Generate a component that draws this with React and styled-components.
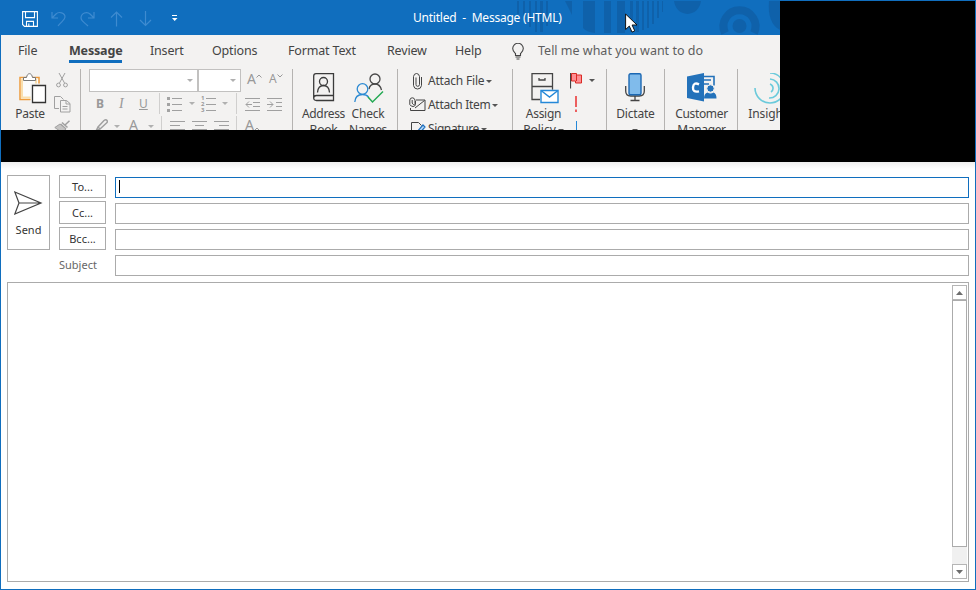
import styled, { createGlobalStyle } from 'styled-components'

export default function App() {
  return (
    <>
      <GlobalStyle />
      <Window>
        <Top>
          <TitleBar>
            <Pattern />
            <QuickAccess />
            <Title>Untitled&nbsp; -&nbsp; Message (HTML)</Title>
            <Cursor />
          </TitleBar>
          <Tabs>
            <Tab>File</Tab>
            <Tab $active>Message</Tab>
            <Tab>Insert</Tab>
            <Tab>Options</Tab>
            <Tab>Format Text</Tab>
            <Tab>Review</Tab>
            <Tab>Help</Tab>
            <BulbIcon />
            <Tab $soft>Tell me what you want to do</Tab>
          </Tabs>
          <Ribbon>
            <ClipboardGroup />
            <FontGroup />
            <NamesGroup />
            <AttachGroup />
            <TagsGroup />
            <Group $width={58}>
              <BigButton $width={57}>
                <DictateIcon />
                <Caption $spacing={-0.2}>Dictate</Caption>
                <Arrow $dark />
              </BigButton>
            </Group>
            <Group $width={73}>
              <BigButton $width={72} $shift={1}>
                <CustomerIcon />
                <Caption $spacing={-0.35}>Customer</Caption>
                <Caption $spacing={-0.35}>Manager</Caption>
              </BigButton>
            </Group>
            <Group $width={42} $last>
              <BigButton $width={63} $shift={2}>
                <InsightsIcon />
                <Caption $spacing={-0.1}>Insights</Caption>
              </BigButton>
            </Group>
          </Ribbon>
        </Top>
        <Compose>
          <Fields>
            <SendButton>
              <SendIcon />
              Send
            </SendButton>
            <FieldButton>To...</FieldButton>
            <Field $focused>
              <Caret />
            </Field>
            <FieldButton>Cc...</FieldButton>
            <Field />
            <FieldButton>Bcc...</FieldButton>
            <Field />
            <Subject>Subject</Subject>
            <Field />
          </Fields>
          <Body>
            <Scrollbar>
              <ScrollButton>
                <svg width="7" height="4" viewBox="0 0 7 4">
                  <path d="M0 4 3.5 0 7 4z" fill="#6d6d6d" />
                </svg>
              </ScrollButton>
              <Thumb />
              <ScrollButton>
                <svg width="7" height="4" viewBox="0 0 7 4">
                  <path d="M0 0h7L3.5 4z" fill="#6d6d6d" />
                </svg>
              </ScrollButton>
            </Scrollbar>
          </Body>
        </Compose>
      </Window>
    </>
  )
}

function QuickAccess() {
  return (
    <QuickBar>
      <svg width="16" height="16" viewBox="0 0 16 16" fill="none" stroke="#fff" strokeWidth="1.1">
        <path d="M.6.6h14.8v14.8H2.5L.6 13.5zM3.5.6v6h9v-6M4.5 15.4v-5h7v5M6.8 12.5v3" />
      </svg>
      <Faded width="16" height="16" viewBox="0 0 16 16">
        <path d="M1 1v6h6M1 7l4-4c3-3 9-1 9 3 0 3-3 4-7 9" />
      </Faded>
      <Faded width="16" height="16" viewBox="0 0 16 16">
        <path d="M14 1v6H8M14 7l-4-4C7 0 1 2 1 7c0 3 3 4 7 8" />
      </Faded>
      <Faded width="16" height="16" viewBox="0 0 16 16">
        <path d="M7.5 15.5V1M2 6.5 7.5 1 13 6.5" />
      </Faded>
      <Faded width="16" height="16" viewBox="0 0 16 16">
        <path d="M7.5 0v14.5M2 9l5.500 5.500L13 9" />
      </Faded>
      <svg width="16" height="16" viewBox="0 0 16 16" fill="#fff">
        <path d="M5 4h5v1H5zM5 7h5.500L7.700 10z" />
      </svg>
    </QuickBar>
  )
}

function Pattern() {
  return (
    <PatternSvg width="270" height="34" viewBox="510 1 270 34">
      <g fill="#0f61aa">
        <path d="M517 1h2v13h-2zM523 1h2v20h-2zM529 1h2v26h-2zM535 1h2v31h-2zM540 1h3v31h-3zM546 1h2v25h-2z" />
        <path d="M565 1h7v14z" />
        <path d="M583 1h12v32q-9-1-12-5zM604 1h7v32h-7zM617 1h8v32h-8z" />
        <path d="M630 1h3v31h-3zM636 1h3v31h-3zM642 1h2v29h-2zM647 1h2v27h-2zM652 1h2v23h-2zM657 1h2v17h-2zM662 1h1v11h-1z" />
        <path d="M674 1h27q-2 12-13.500 13Q676 13 674 1z" />
        <path d="M780 1h-11q-2 22 11 29z" />
        <circle cx="739.500" cy="26" r="7" />
      </g>
      <path d="M725 33a16 16 0 1 1 29 0" fill="none" stroke="#0f61aa" strokeWidth="8" />
    </PatternSvg>
  )
}

function Cursor() {
  return (
    <CursorSvg width="13" height="21" viewBox="0 0 13 21">
      <path d="M.6 1v15.500l3.700-3.400 2.700 6 2.800-1.200-2.700-5.900h4.900z" fill="#fff" stroke="#111" />
    </CursorSvg>
  )
}

function BulbIcon() {
  return (
    <Bulb width="12" height="17" viewBox="0 0 12 17">
      <path
        d="M3.500 12.500v-2C2 9 .7 8 .7 5.600a5.300 5.300 0 0 1 10.600 0C11.300 8 10 9 8.500 10.500v2zM3.500 14h5M4.500 16h3"
        fill="none"
        stroke="#444"
        strokeWidth="1.100"
      />
    </Bulb>
  )
}

function ClipboardGroup() {
  return (
    <Group $width={80}>
      <BigButton $width={56} $shift={2} $iconShift={5}>
        <svg width="28" height="31" viewBox="0 0 28 31">
          <path d="M1 4.500h19v22H1z" fill="#fcfcfc" stroke="#ee9c3c" strokeWidth="1.500" />
          <path d="M3 6v18.500h14V6" fill="none" stroke="#f9dfae" strokeWidth="2" />
          <path d="M4.500 7.500v-3h3C8 2 9 .7 10.500.7S13 2 13.500 4.500h3v3z" fill="#fff" stroke="#777" />
          <path d="M11.500 10.500h16v20h-16z" fill="#f3f2f1" />
          <path d="M13.500 12.500h13v17h-13z" fill="#fff" stroke="#333" strokeWidth="1.300" />
        </svg>
        <Caption $spacing={-0.3}>Paste</Caption>
        <Arrow $dark />
      </BigButton>
      <SideTools>
        <Gray width="16" height="16" viewBox="0 0 16 16">
          <path d="m5 1 5.500 10M11 1 5.500 11" />
          <circle cx="4.500" cy="13" r="1.900" />
          <circle cx="11.500" cy="13" r="1.900" />
        </Gray>
        <Gray width="17" height="17" viewBox="0 0 17 17">
          <path d="M5 12.500H.5V.5h6l3 3M6.500 4.500h6l3.500 3v8.500H6.500zM12 4.500V8h4M8.500 10.500h5M8.500 13h5" />
        </Gray>
        <Gray width="17" height="17" viewBox="0 0 17 17">
          <path d="M15.500.8 11 5M8 2.500l5.500 5M6.500 4l5.500 5" strokeWidth="1.500" />
          <path d="M6 4 .8 7.500 8 12.500 12 9z" fill="#c4c3c2" />
        </Gray>
      </SideTools>
    </Group>
  )
}

function FontGroup() {
  return (
    <Group $width={212}>
      <FontTools>
        <ToolRow>
          <Combo $width={109}>
            <Arrow />
          </Combo>
          <Combo $width={43}>
            <Arrow />
          </Combo>
          <Cell $width={22} $pad={6}>
            <Glyph $size={14} $raised>
              A
            </Glyph>
            <Chevron up />
          </Cell>
          <Cell $width={18} $pad={6}>
            <Glyph $size={12} $raised>
              A
            </Glyph>
            <Chevron />
          </Cell>
        </ToolRow>
        <ToolRow>
          <Cell $width={22} $pad={7}>
            <Glyph $size={12} $bold>
              B
            </Glyph>
          </Cell>
          <Cell $width={22} $pad={8}>
            <Serif>I</Serif>
          </Cell>
          <Cell $width={26} $pad={6}>
            <Glyph $size={12} $underline>
              U
            </Glyph>
          </Cell>
          <Divider />
          <Cell $width={29} $pad={7}>
            <Gray width="16" height="16" viewBox="0 0 16 16">
              <path d="M5 2.500h10M5 8.500h10M5 14.500h10" />
              <path d="M0 1h3v3H0zM0 7h3v3H0zM0 13h3v3H0z" fill="#a3a3a3" stroke="none" />
            </Gray>
          </Cell>
          <Cell $width={6}>
            <Arrow />
          </Cell>
          <Cell $width={27} $pad={6}>
            <NumberList>
              <i>1</i>
              <i>2</i>
              <i>3</i>
            </NumberList>
            <Gray width="10" height="16" viewBox="0 0 10 16">
              <path d="M0 2.500h10M0 8.500h10M0 14.500h10" />
            </Gray>
          </Cell>
          <Cell $width={14}>
            <Arrow />
          </Cell>
          <Divider />
          <Cell $width={30} $pad={8}>
            <Gray width="15" height="14" viewBox="0 0 15 14">
              <path d="M0 1.500h15M8 5.500h7M8 9.500h7M0 13.500h15M1 7.500h6M4 4.500l-3 3 3 3" />
            </Gray>
          </Cell>
          <Cell $width={15}>
            <Gray width="15" height="14" viewBox="0 0 15 14">
              <path d="M0 1.500h15M9 5.500h6M9 9.500h6M0 13.500h15M0 7.500h6M3 4.500l3 3-3 3" />
            </Gray>
          </Cell>
        </ToolRow>
        <ToolRow>
          <Cell $width={25} $pad={5}>
            <Gray width="14" height="15" viewBox="0 0 14 15">
              <path d="M4 8 10 1.500q2-1.500 3 0 1 1-.5 2.500L6 10zM4 8l-2 4 4-2M1 13h7" strokeWidth="1.500" />
            </Gray>
          </Cell>
          <Cell $width={9}>
            <Arrow />
          </Cell>
          <Cell $width={25} $pad={6}>
            <Glyph $size={14} $raised>
              A
            </Glyph>
          </Cell>
          <Cell $width={13}>
            <Arrow />
          </Cell>
          <Divider />
          <Cell $width={23} $pad={8}>
            <Gray width="15" height="15" viewBox="0 0 15 15">
              <path d="M0 2.500h15M0 6.500h10M0 10.500h15" />
            </Gray>
          </Cell>
          <Cell $width={22} $pad={7}>
            <Gray width="15" height="15" viewBox="0 0 15 15">
              <path d="M0 2.500h15M3 6.500h9M0 10.500h15" />
            </Gray>
          </Cell>
          <Cell $width={29} $pad={7}>
            <Gray width="15" height="15" viewBox="0 0 15 15">
              <path d="M0 2.500h15M5 6.500h10M0 10.500h15" />
            </Gray>
          </Cell>
          <Divider />
          <Cell $width={20} $pad={8}>
            <Glyph $size={14} $raised>
              A
            </Glyph>
            <Chevron up low />
          </Cell>
        </ToolRow>
      </FontTools>
    </Group>
  )
}

function Chevron({ up, low }) {
  return (
    <ChevronSvg $low={low} width="6" height="4" viewBox="0 0 6 4">
      <path d={up ? 'M.5 3.500 3 1l2.500 2.500' : 'M.5.5 3 3 5.500.5'} fill="none" stroke="#999" />
    </ChevronSvg>
  )
}

function NamesGroup() {
  return (
    <Group $width={105}>
      <BigButton $width={59} $shift={2}>
        <svg width="22" height="29" viewBox="0 0 22 29" fill="none" stroke="#3b3b3b" strokeWidth="1.300">
          <path d="M20.500.7v26.800H3.500Q.7 27.500.7 25V3Q.7.7 3 .7zM.7 25q0-2.500 2.800-2.500h17" />
          <circle cx="10.500" cy="8.500" r="4" />
          <path d="M4.500 19.500q.5-7 6-7t6 7" />
        </svg>
        <Caption $spacing={-0.35}>Address</Caption>
        <Caption $spacing={-0.2}>Book</Caption>
      </BigButton>
      <BigButton $width={30} $iconShift={2}>
        <svg width="30" height="31" viewBox="0 0 30 31" fill="none" strokeWidth="1.300">
          <circle cx="21" cy="6" r="5" stroke="#484848" />
          <path d="M15 16q1-5 6-5t6.500 6" stroke="#484848" />
          <circle cx="8.500" cy="16" r="5.300" stroke="#2b8ad2" />
          <path d="M.8 29q.5-7.500 7.700-7.500 4 0 6 2.500" stroke="#2b8ad2" />
          <path d="m14 24 4.500 5L29 18.500" stroke="#24a953" strokeWidth="1.500" />
        </svg>
        <Caption $spacing={-0.2}>Check</Caption>
        <Caption $spacing={-0.3}>Names</Caption>
      </BigButton>
    </Group>
  )
}

function AttachGroup() {
  return (
    <Group $width={115}>
      <AttachList>
        <AttachRow>
          <svg width="17" height="17" viewBox="0 0 17 17" fill="none" stroke="#444">
            <path d="M12.500 4v8.500q-.5 3.500-4 3.500t-4-3.500V3.500q.5-3 3-3t3 3v8q0 1.800-1.800 1.800T7 11.500V4.500" />
          </svg>
          <Caption $spacing={-0.2}>Attach File</Caption>
          <Arrow $dark />
        </AttachRow>
        <AttachRow>
          <svg width="17" height="17" viewBox="0 0 17 17" fill="none" stroke="#444">
            <path d="M7 3h9v10.500H1.500V11M6 11l9.500-7.500M6.500 4v3.500Q6 9.500 4 9.500T.8 7.500V3Q1.200.8 3.300.8T6 3v3.500q-.5 1.500-1.500 1T3.200 6V3" />
          </svg>
          <Caption $spacing={-0.3}>Attach Item</Caption>
          <Arrow $dark />
        </AttachRow>
        <AttachRow>
          <svg width="17" height="17" viewBox="0 0 17 17" fill="none">
            <path d="M2.500 16V1.500h7l3 3" stroke="#444" />
            <path d="m7 12 7-8 2 2-7 8-3 1z" fill="#b8daf5" stroke="#1d6fc0" strokeWidth="1.200" />
          </svg>
          <Caption $spacing={-0.4}>Signature</Caption>
          <Arrow $dark />
        </AttachRow>
      </AttachList>
    </Group>
  )
}

function TagsGroup() {
  return (
    <Group $width={94}>
      <BigButton $width={57} $shift={4} $iconShift={3}>
        <svg width="28" height="31" viewBox="0 0 28 31" fill="none">
          <path d="M9 26.500H1V.7h20.500v16M1 13.500h20.500M8 5v2h6V5" stroke="#444" strokeWidth="1.300" />
          <path d="M10 17.500h17v12H10z" fill="#fff" stroke="#2488d8" strokeWidth="1.400" />
          <path d="m10 17.500 8.500 6.500 8.500-6.500" stroke="#2488d8" strokeWidth="1.400" />
        </svg>
        <Caption $spacing={-0.3}>Assign</Caption>
        <CaptionLine>
          <Caption>Policy</Caption>
          <Arrow $dark />
        </CaptionLine>
      </BigButton>
      <TagTools>
        <TagRow>
          <svg width="12" height="17" viewBox="0 0 12 17">
            <path d="M1.500 1.500h5v1.500h5v8h-6v-2h-4z" fill="#ff8d92" stroke="#d92b25" />
            <path d="M6.500 2v7" stroke="#d92b25" />
            <path d="M.6 1v15.500" stroke="#333" />
          </svg>
          <Arrow $dark />
        </TagRow>
        <svg width="13" height="17" viewBox="0 0 13 17" fill="#ec5f5f">
          <path d="M5 0h2v11H5zM5 13.500h2V16H5z" />
        </svg>
        <LowMark width="13" height="16" viewBox="0 0 13 16">
          <path d="M6.500 0v15M2 10.500 6.500 15l4.500-4.500" fill="none" stroke="#2488d8" />
        </LowMark>
      </TagTools>
    </Group>
  )
}

function DictateIcon() {
  return (
    <svg width="20" height="29" viewBox="0 0 20 29" fill="none">
      <path d="M.7 13v5q0 5 5 5h8.600q5 0 5-5v-5M10 23v4.500M5.500 27.500h9" stroke="#444" strokeWidth="1.300" />
      <rect x="4" y=".7" width="12" height="21" rx="1.500" fill="#80bbeb" stroke="#1b68b3" strokeWidth="1.400" />
    </svg>
  )
}

function CustomerIcon() {
  return (
    <svg width="30" height="29" viewBox="0 0 30 29">
      <path d="M16 3.500h11v9M17 7h7M17 11h5" fill="none" stroke="#2372ba" strokeWidth="1.600" />
      <path d="M17 25.500q0-5 3.500-6 3 2 6 0 3 1 3 6z" fill="#2372ba" />
      <circle cx="23.500" cy="15.500" r="3.700" fill="#2372ba" stroke="#f3f2f1" />
      <path d="M0 3.500 17 0v28.500L0 25z" fill="#2372ba" />
      <path d="M12 11.300q-5.500-2.500-6 3t6 4" fill="none" stroke="#fff" strokeWidth="2.400" />
    </svg>
  )
}

function InsightsIcon() {
  return (
    <svg width="34" height="31" viewBox="0 0 34 31" fill="none" stroke="#6bcadb" strokeWidth="1.600">
      <path d="M1 15a15 15 0 0 0 30 0M16 0a14 14 0 0 1 13 9" />
      <path d="M16 6a9.500 9.500 0 1 1-1 19M16 11a4.500 4.500 0 0 1 1 8" />
    </svg>
  )
}

function SendIcon() {
  return (
    <svg width="30" height="24" viewBox="0 0 30 24" fill="none" stroke="#444" strokeWidth="1.200">
      <path d="M.8 1 27 12 .8 23 5 12zM5 12h22" />
    </svg>
  )
}

const GlobalStyle = createGlobalStyle`
  * {
    box-sizing: border-box;
  }

  body {
    margin: 0;
    overflow: hidden;
    font-family: 'Noto Sans', sans-serif;
    font-size: 12px;
    color: #444;
  }

  svg {
    display: block;
    flex-shrink: 0;
  }
`

const Window = styled.div`
  width: 976px;
  height: 590px;
  display: flex;
  flex-direction: column;
  border: 1px solid #106ebe;
  background: #000;
`

const Top = styled.header`
  width: 779px;
  height: 129px;
  overflow: hidden;
  background: #f3f2f1;
`

const TitleBar = styled.div`
  position: relative;
  height: 34px;
  display: flex;
  align-items: center;
  background: #106ebe;
  color: #fff;
`

const PatternSvg = styled.svg`
  position: absolute;
  top: 0;
  right: 0;
`

const CursorSvg = styled.svg`
  position: absolute;
  left: 624px;
  top: 12px;
`

const QuickBar = styled.div`
  display: flex;
  gap: 13px;
  padding: 1px 0 0 21px;
  width: 412px;
`

const Faded = styled.svg`
  fill: none;
  stroke: #3e8bd0;
  stroke-width: 1.2;
`

const Title = styled.span`
  position: relative;
  white-space: nowrap;
  margin-top: -1px;
  letter-spacing: -0.22px;
`

const Tabs = styled.nav`
  height: 31px;
  display: grid;
  grid-template-columns: 51px 81px 62px 76px 99px 68px 57px 26px auto;
  padding-left: 17px;
`

const Tab = styled.span`
  justify-self: start;
  height: 28px;
  line-height: 31px;
  font-size: 12.5px;
  white-space: nowrap;
  letter-spacing: ${(props) => (props.$soft ? '0' : '-0.17px')};
  font-weight: ${(props) => (props.$active ? 700 : 400)};
  color: ${(props) => (props.$soft ? '#5e5e5e' : '#444')};
  border-bottom: ${(props) => (props.$active ? '3px solid #106ebe' : 'none')};
`

const Bulb = styled.svg`
  margin-top: 8px;
`

const Ribbon = styled.div`
  height: 64px;
  display: flex;
  padding-top: 3px;
`

const Group = styled.section`
  width: ${(props) => props.$width}px;
  height: 80px;
  flex-shrink: 0;
  display: flex;
  overflow: hidden;
  border-right: ${(props) => (props.$last ? 'none' : '1px solid #b5b3b1')};
`

const BigButton = styled.div`
  width: ${(props) => props.$width}px;
  padding: ${(props) => `4px 0 0 ${props.$shift || 0}px`};
  flex-shrink: 0;
  display: grid;
  grid-template-rows: 33px 16px 16px;
  justify-items: center;
  justify-content: center;

  > svg {
    margin-left: ${(props) => props.$iconShift || 0}px;
  }

  & + & {
    margin-left: 1px;
  }
`

const Caption = styled.span`
  line-height: 16px;
  white-space: nowrap;
  letter-spacing: ${(props) => props.$spacing || 0}px;
`

const CaptionLine = styled.div`
  display: flex;
  align-items: center;
  gap: 2px;
`

const Arrow = styled.i`
  align-self: center;
  width: 0;
  height: 0;
  flex-shrink: 0;
  border: 3px solid transparent;
  border-top-color: ${(props) => (props.$dark ? '#555' : '#b0b0b0')};
  border-bottom: 0;
`

const SideTools = styled.div`
  display: grid;
  grid-template-rows: 24px 24px 24px;
  padding-top: 3px;
  margin-left: -3px;
`

const Gray = styled.svg`
  fill: none;
  stroke: #a0a0a0;
`

const FontTools = styled.div`
  padding-left: 8px;
`

const ToolRow = styled.div`
  height: 23px;
  display: flex;
  align-items: center;
`

const Combo = styled.div`
  width: ${(props) => props.$width}px;
  height: 23px;
  display: flex;
  justify-content: flex-end;
  padding-right: 4px;
  border: 1px solid #c2c1c0;
  background: #fff;
`

const Cell = styled.div`
  width: ${(props) => props.$width}px;
  flex-shrink: 0;
  display: flex;
  align-items: center;
  padding-left: ${(props) => props.$pad || 0}px;
`

const Glyph = styled.span`
  font-size: ${(props) => props.$size}px;
  line-height: 18px;
  margin-bottom: ${(props) => (props.$raised ? 3 : 0)}px;
  color: #999;
  font-weight: ${(props) => (props.$bold ? 700 : 400)};
  text-decoration: ${(props) => (props.$underline ? 'underline' : 'none')};
`

const Serif = styled.span`
  font: italic 14px 'Liberation Serif', serif;
  color: #999;
`

const NumberList = styled.span`
  width: 5px;
  flex-shrink: 0;
  display: grid;
  font-size: 6px;
  font-weight: 700;
  line-height: 6px;
  color: #999;

  i {
    font-style: normal;
  }
`

const ChevronSvg = styled.svg`
  margin-bottom: ${(props) => (props.$low ? -4 : 10)}px;
`

const Divider = styled.i`
  width: 1px;
  height: 21px;
  flex-shrink: 0;
  background: #d0cfce;
`

const AttachList = styled.div`
  padding-left: 11px;
`

const AttachRow = styled.div`
  height: 24px;
  display: flex;
  align-items: center;
  gap: 2px;
`

const TagTools = styled.div`
  display: grid;
  grid-template-rows: 24px 24px 20px;
  padding-top: 3px;
`

const TagRow = styled.div`
  display: flex;
  gap: 7px;
  height: 17px;
`

const LowMark = styled.svg`
  margin-top: 1px;
`

const Compose = styled.main`
  margin-top: 32px;
  flex: 1;
  padding: 13px 6px 0;
  background: linear-gradient(#eee, #fff 7px);
`

const Fields = styled.div`
  display: grid;
  grid-template-columns: 43px 47px 854px;
  grid-auto-rows: 23px;
  gap: 3px 9px;
  color: #333;
  font-size: 11px;
`

const SendButton = styled.div`
  grid-row: 1 / 4;
  display: flex;
  flex-direction: column;
  align-items: center;
  gap: 7px;
  padding-top: 15px;
  border: 1px solid #ababab;
  background: #fff;
  line-height: 16px;
`

const FieldButton = styled.div`
  grid-column: 2;
  border: 1px solid #ababab;
  background: #fff;
  text-align: center;
  line-height: 21px;
`

const Field = styled.div`
  grid-column: 3;
  align-self: end;
  height: 21px;
  padding: 2px 3px;
  border: 1px solid ${(props) => (props.$focused ? '#106ebe' : '#ababab')};
  background: #fff;
`

const Caret = styled.i`
  display: block;
  width: 1px;
  height: 13px;
  background: #000;
`

const Subject = styled.span`
  grid-column: 2;
  line-height: 24px;
  color: #666;
`

const Body = styled.div`
  height: 300px;
  margin-top: 6px;
  display: flex;
  justify-content: flex-end;
  padding: 2px 1px;
  border: 1px solid #ababab;
  background: #fff;
`

const Scrollbar = styled.div`
  width: 15px;
  height: 294px;
  display: grid;
  grid-template-rows: 15px 264px 15px;
  background: #f0f0f0;
`

const ScrollButton = styled.div`
  display: grid;
  place-items: center;
  border: 1px solid #b5b5b5;
  background: #fff;
`

const Thumb = styled.div`
  height: 247px;
  border: 1px solid #ababab;
  background: #fff;
`
